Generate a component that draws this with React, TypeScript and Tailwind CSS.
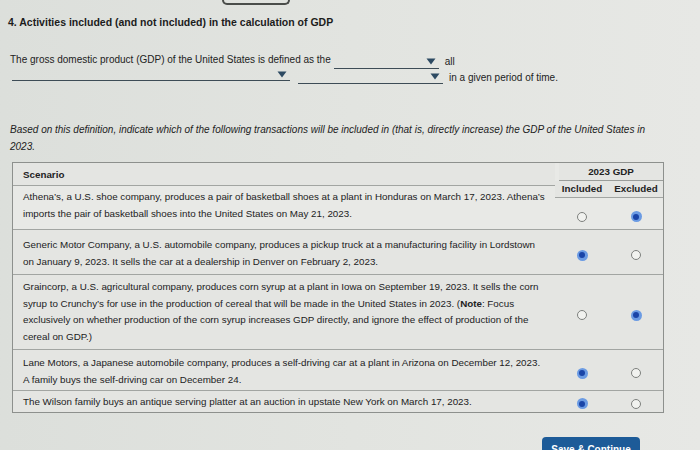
import React from "react";

function Arrow() {
  return (
    <svg width="10" height="7" viewBox="0 0 10 7" className="block">
      <path d="M0.5 0.5 L9.5 0.5 L5 6.5 Z" fill="#2d4a62" />
    </svg>
  );
}

function Dropdown({ className }: { className: string }) {
  return (
    <span className={"flex items-start justify-end border-b-[1.5px] border-[#3d4c56] " + className}>
      <span className="pr-[3px]">
        <Arrow />
      </span>
    </span>
  );
}

function Radio({ on }: { on?: boolean }) {
  if (on) {
    return (
      <span className="flex h-[11px] w-[11px] items-center justify-center rounded-full bg-[#6b9be3]">
        <span className="h-[6px] w-[6px] rounded-full bg-[#1a45a8]" />
      </span>
    );
  }
  return <span className="h-[10px] w-[10px] rounded-full border border-[#7d807d] bg-[#f1f2ef]" />;
}

function Radios({ inc }: { inc: boolean }) {
  return (
    <div className="flex w-[108px] shrink-0 items-center pt-[6px]">
      <div className="flex w-[54px] justify-center">
        <Radio on={inc} />
      </div>
      <div className="flex w-[54px] justify-center">
        <Radio on={!inc} />
      </div>
    </div>
  );
}

export default function App() {
  return (
    <div className="h-[450px] w-[700px] overflow-hidden bg-gradient-to-r from-[#dcdfdb] via-[#e2e4e0] to-[#e7e8e5] font-['Liberation_Sans',Arial,sans-serif] text-[#222222]">
      <div className="ml-[222px] h-[5px] w-[68px] rounded-b-[5px] border-2 border-t-0 border-[#4a4d4a]" />
      <div className="mt-[11px] pl-[8px] text-[10.5px] font-bold leading-[13px] text-[#1c1c1c]">
        4. Activities included (and not included) in the calculation of GDP
      </div>

      <div className="mt-[25px] flex h-[15px] items-end pl-[10px] text-[10px]">
        <span className="mb-[3px] leading-[12px]">The gross domestic product (GDP) of the United States is defined as the</span>
        <Dropdown className="ml-[3px] h-[14px] w-[105px] pt-[3px]" />
        <span className="mb-[1px] ml-[6px] leading-[12px]">all</span>
      </div>
      <div className="mt-[0px] flex h-[16px] items-end pl-[12px] text-[10px]">
        <Dropdown className="mb-[4px] h-[12px] w-[278px] pt-[2px]" />
        <Dropdown className="mb-[1px] ml-[8px] h-[13px] w-[145px] pt-[2px]" />
        <span className="mb-[1px] ml-[6px] leading-[12px]">in a given period of time.</span>
      </div>

      <div className="mt-[36px] pl-[10px] text-[10px] italic leading-[17px]">
        Based on this definition, indicate which of the following transactions will be included in (that is, directly increase) the GDP of the United States in
        <br />
        2023.
      </div>

      <div className="ml-[12px] mt-[7px] w-[652px] border border-[#8d908d] bg-[#e4e5e2] text-[9.8px]">
        <div className="flex h-[66px]">
          <div className="flex flex-1 flex-col">
            <div className="flex h-[23px] items-center border-b border-[#a2a5a2] pl-[10px] pt-[2px] font-bold">Scenario</div>
            <div className="flex-1 bg-[#e8e9e6] pl-[10px] pt-[2px] leading-[17px]">
              Athena’s, a U.S. shoe company, produces a pair of basketball shoes at a plant in Honduras on March 17, 2023. Athena’s
              <br />
              imports the pair of basketball shoes into the United States on May 21, 2023.
            </div>
          </div>
          <div className="flex w-[108px] shrink-0 flex-col bg-[#e8e9e6]">
            <div className="ml-[4px] flex h-[18px] items-center justify-center border-b border-[#9a9d9a] bg-[#e4e5e2] pt-[1px] font-bold">
              2023 GDP
            </div>
            <div className="flex h-[17px] items-center border-b border-[#a2a5a2] bg-[#e4e5e2] font-bold">
              <div className="w-[54px] text-center">Included</div>
              <div className="w-[54px] text-center">Excluded</div>
            </div>
            <div className="flex flex-1 items-center pt-[6px]">
              <div className="flex w-[54px] justify-center">
                <Radio />
              </div>
              <div className="flex w-[54px] justify-center">
                <Radio on />
              </div>
            </div>
          </div>
        </div>

        <div className="flex h-[45px] border-t border-[#a2a5a2]">
          <div className="flex-1 pl-[10px] pt-[6px] leading-[17px]">
            Generic Motor Company, a U.S. automobile company, produces a pickup truck at a manufacturing facility in Lordstown
            <br />
            on January 9, 2023. It sells the car at a dealership in Denver on February 2, 2023.
          </div>
          <Radios inc />
        </div>

        <div className="flex h-[75px] border-t border-[#a2a5a2]">
          <div className="flex-1 pl-[10px] pt-[4px] leading-[16.5px]">
            Graincorp, a U.S. agricultural company, produces corn syrup at a plant in Iowa on September 19, 2023. It sells the corn
            <br />
            syrup to Crunchy’s for use in the production of cereal that will be made in the United States in 2023. (<b>Note</b>: Focus
            <br />
            exclusively on whether production of the corn syrup increases GDP directly, and ignore the effect of production of the
            <br />
            cereal on GDP.)
          </div>
          <Radios inc={false} />
        </div>

        <div className="flex h-[41px] border-t border-[#a2a5a2]">
          <div className="flex-1 pl-[10px] pt-[5px] leading-[16.5px]">
            Lane Motors, a Japanese automobile company, produces a self-driving car at a plant in Arizona on December 12, 2023.
            <br />
            A family buys the self-driving car on December 24.
          </div>
          <Radios inc />
        </div>

        <div className="flex h-[22px] border-t border-[#a2a5a2]">
          <div className="flex-1 pl-[10px] pt-[3px] leading-[16px]">
            The Wilson family buys an antique serving platter at an auction in upstate New York on March 17, 2023.
          </div>
          <div className="flex w-[108px] shrink-0 items-center pt-[4px]">
            <div className="flex w-[54px] justify-center">
              <Radio on />
            </div>
            <div className="flex w-[54px] justify-center">
              <Radio />
            </div>
          </div>
        </div>
      </div>

      <div className="ml-[542px] mt-[24px] h-[20px] w-[98px] rounded-t-[4px] bg-[#1d5b98] pt-[7px] text-center text-[10px] font-bold leading-[12px] text-white">
        Save &amp; Continue
      </div>
    </div>
  );
}
